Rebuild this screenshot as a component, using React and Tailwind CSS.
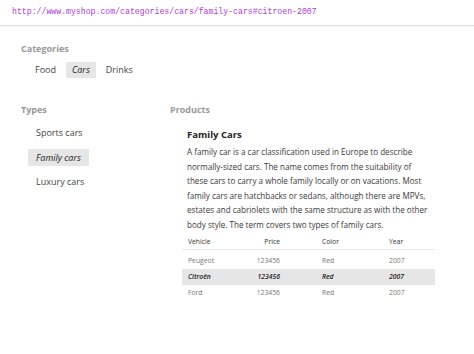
import React from 'react';

const categories = ['Food', 'Cars', 'Drinks'];
const types = ['Sports cars', 'Family cars', 'Luxury cars'];
const lines = [
    'A family car is a car classification used in Europe to describe',
    'normally-sized cars. The name comes from the suitability of',
    'these cars to carry a whole family locally or on vacations. Most',
    'family cars are hatchbacks or sedans, although there are MPVs,',
    'estates and cabriolets with the same structure as with the other',
    'body style. The term covers two types of family cars.',
];
const rows = [
    { vehicle: 'Peugeot', price: '123456', color: 'Red', year: '2007' },
    { vehicle: 'Citroën', price: '123456', color: 'Red', year: '2007', active: true },
    { vehicle: 'Ford', price: '123456', color: 'Red', year: '2007' },
];

const App = () => {
    return (
        <div className="w-[474px] h-[354px] bg-white text-[#333] overflow-hidden" style={{ fontFamily: '"Open Sans", sans-serif' }}>
            {/* address bar */}
            <div className="h-[26px] border-b border-[#dcdcdc] shadow-[0_1px_2px_rgba(0,0,0,0.06)] px-[12px] pt-[6px]">
                <span className="block text-[8.2px] leading-[12px] text-[#b03cd8]" style={{ fontFamily: '"Liberation Mono", monospace' }}>
                    http://www.myshop.com/categories/cars/family-cars#citroen-2007
                </span>
            </div>

            <div className="pl-[21px] pt-[16px]">
                <h2 className="text-[9px] font-bold text-[#999] leading-[14px]">Categories</h2>
                <div className="flex gap-[4px] mt-[6px] pl-[8px]">
                    {categories.map(c => (
                        <span key={c} className={`text-[9px] leading-[16px] px-[6px] ${c === 'Cars' ? 'bg-[#e6e6e6] italic text-[#222]' : 'text-[#444]'}`}>{c}</span>
                    ))}
                </div>
            </div>

            <div className="flex pl-[21px] pt-[25px]">
                <div className="w-[149px]">
                    <h2 className="text-[9px] font-bold text-[#999] leading-[14px]">Types</h2>
                    <div className="flex flex-col gap-[7.5px] mt-[7px] pl-[7px] items-start">
                        {types.map(t => (
                            <span key={t} className={`text-[9px] leading-[17px] px-[8px] ${t === 'Family cars' ? 'bg-[#e6e6e6] italic text-[#222]' : 'text-[#444]'}`}>{t}</span>
                        ))}
                    </div>
                </div>

                <div className="flex-1">
                    <h2 className="text-[9px] font-bold text-[#999] leading-[14px]">Products</h2>
                    <div className="pl-[17px] mt-[10px]">
                        <h3 className="text-[9.5px] font-bold text-[#222] leading-[16px]">Family Cars</h3>
                        <p className="text-[8.1px] leading-[14.5px] text-[#3a3a3a] mt-[2px] whitespace-nowrap">
                            {lines.map((l, i) => (
                                <React.Fragment key={i}>{l}{i < lines.length - 1 && <br />}</React.Fragment>
                            ))}
                        </p>
                        <table className="mt-[3px] w-[253px] -ml-[5px] text-[6.8px] border-collapse">
                            <thead>
                                <tr className="border-b border-[#e8e8e8] text-[#333]">
                                    <th className="font-normal text-left pl-[6px] h-[14px] w-[58px]">Vehicle</th>
                                    <th className="font-normal text-right w-[40px]">Price</th>
                                    <th className="font-normal text-left pl-[42px] w-[109px]">Color</th>
                                    <th className="font-normal text-left">Year</th>
                                </tr>
                            </thead>
                            <tbody>
                                <tr className="h-[4px]"><td colSpan={4} /></tr>
                                {rows.map(r => (
                                    <tr key={r.vehicle} className={r.active ? 'bg-[#e6e6e6] italic font-semibold text-[#222]' : 'text-[#777]'}>
                                        <td className="pl-[6px] h-[16px]">{r.vehicle}</td>
                                        <td className="text-right">{r.price}</td>
                                        <td className="pl-[42px]">{r.color}</td>
                                        <td>{r.year}</td>
                                    </tr>
                                ))}
                            </tbody>
                        </table>
                    </div>
                </div>
            </div>
        </div>
    );
};

export default App;
